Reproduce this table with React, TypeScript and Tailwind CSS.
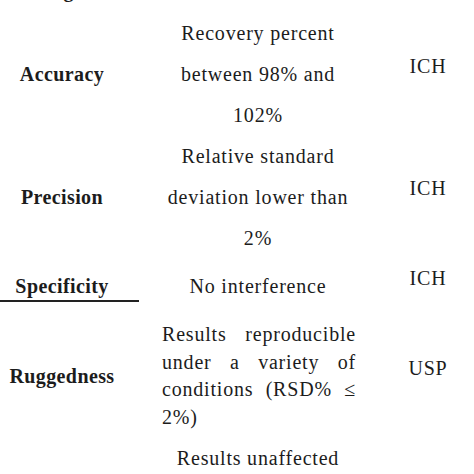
export default function App() {
  const row = "grid grid-cols-[139px_238px_97px]";
  return (
    <div className="h-[474px] w-[474px] overflow-hidden bg-white text-[#1c1c1c] font-['Liberation_Serif',serif] text-[20px] tracking-[0.8px]">
      {/* previous row, cut off at the top */}
      <div className={`${row} -mt-[30px] h-[43px] leading-[41px]`}>
        <div className="pr-[29px] text-center font-bold tracking-[0.4px]">Range</div>
        <div />
        <div />
      </div>

      {/* Accuracy */}
      <div className={`${row} items-center leading-[41px]`}>
        <div className="pr-[15px] text-center font-bold tracking-[0.4px]">Accuracy</div>
        <div className="text-center">
          Recovery percent
          <br />
          between 98% and
          <br />
          102%
        </div>
        <div className="pl-[5px] pb-[16px] text-center">ICH</div>
      </div>

      {/* Precision */}
      <div className={`${row} items-center leading-[41px]`}>
        <div className="pr-[15px] text-center font-bold tracking-[0.4px]">Precision</div>
        <div className="text-center">
          Relative standard
          <br />
          deviation lower than
          <br />
          2%
        </div>
        <div className="pl-[5px] pb-[18px] text-center">ICH</div>
      </div>

      {/* Specificity */}
      <div className={`${row} h-[43px] leading-[24px]`}>
        <div className="flex items-end justify-center pr-[15px] pb-[2px] border-b-2 border-[#222] font-bold tracking-[0.4px]">
          Specificity
        </div>
        <div className="self-end pb-[4px] text-center">No interference</div>
        <div className="self-end pb-[12px] pl-[5px] text-center">ICH</div>
      </div>

      {/* Ruggedness */}
      <div className={`${row} items-center pt-[19px] pb-[6px] leading-[27.7px]`}>
        <div className="pr-[15px] text-center font-bold tracking-[0.4px]">Ruggedness</div>
        <div className="pl-[23px] pr-[21px]">
          <div className="text-justify [text-align-last:justify]">Results reproducible</div>
          <div className="text-justify [text-align-last:justify]">under a variety of</div>
          <div className="text-justify [text-align-last:justify]">conditions (RSD% ≤</div>
          <div className="text-left">2%)</div>
        </div>
        <div className="pl-[5px] pb-[16px] text-center">USP</div>
      </div>

      {/* Robustness (cut off) */}
      <div className={`${row} leading-[41px]`}>
        <div />
        <div className="text-center">Results unaffected</div>
        <div />
      </div>
    </div>
  );
}
